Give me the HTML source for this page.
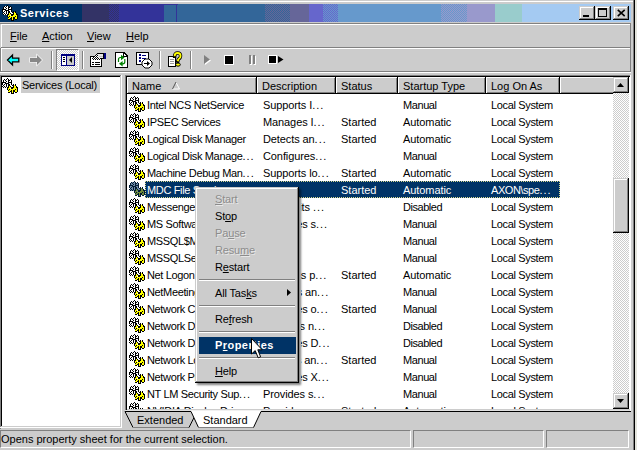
<!DOCTYPE html><html><head><meta charset="utf-8"><style>
*{margin:0;padding:0;box-sizing:border-box}
html,body{width:637px;height:450px;overflow:hidden;background:#cccccc;font-family:"Liberation Sans",sans-serif;font-size:11px;color:#000}
.a{position:absolute}
.t{position:absolute;white-space:nowrap;line-height:13px;height:13px}
.raised{position:absolute;background:#cccccc;box-shadow:inset -1px -1px 0 #000,inset 1px 1px 0 #fff,inset -2px -2px 0 #808080}
.raised2{position:absolute;background:#cccccc;box-shadow:inset -1px -1px 0 #000,inset 1px 1px 0 #cccccc,inset -2px -2px 0 #808080,inset 2px 2px 0 #fff}
.u{text-decoration:underline;text-underline-offset:1px}
.dis{color:#999999;text-shadow:1px 1px 0 #fff}
</style></head><body>
<svg width="0" height="0" style="position:absolute"><defs><symbol id="gear" viewBox="0 0 16 16" shape-rendering="crispEdges"><path d="M5 0h1v1h-1zM2 1h1v1h-1zM4 1h1v1h-1zM6 1h1v1h-1zM8 1h1v1h-1zM1 2h1v1h-1zM3 2h1v1h-1zM6 2h2v1h-2zM9 2h1v1h-1zM1 3h1v1h-1zM4 3h1v1h-1zM6 3h1v1h-1zM9 3h1v1h-1zM0 4h4v1h-4zM6 4h4v1h-4zM0 5h1v1h-1zM3 5h4v1h-4zM9 5h1v1h-1zM0 6h1v1h-1zM2 6h1v1h-1zM4 6h1v1h-1zM6 6h2v1h-2zM9 6h1v1h-1zM11 6h1v1h-1zM13 6h1v1h-1zM1 7h1v1h-1zM4 7h1v1h-1zM6 7h2v1h-2zM10 7h2v1h-2zM13 7h1v1h-1zM0 8h1v1h-1zM2 8h1v1h-1zM4 8h1v1h-1zM6 8h1v1h-1zM8 8h1v1h-1zM11 8h1v1h-1zM14 8h1v1h-1zM1 9h1v1h-1zM3 9h1v1h-1zM5 9h2v1h-2zM9 9h3v1h-3zM14 9h2v1h-2zM5 10h1v1h-1zM9 10h2v1h-2zM15 10h1v1h-1zM5 11h1v1h-1zM7 11h1v1h-1zM13 11h1v1h-1zM15 11h1v1h-1zM6 12h1v1h-1zM9 12h1v1h-1zM11 12h2v1h-2zM15 12h1v1h-1zM8 13h2v1h-2zM11 13h2v1h-2zM15 13h1v1h-1zM6 14h2v1h-2zM9 14h1v1h-1zM11 14h1v1h-1zM13 14h2v1h-2zM9 15h3v1h-3z" fill="#000"/><path d="M3 1h1v1h-1zM5 1h1v1h-1zM2 2h1v1h-1zM4 2h2v1h-2zM8 2h1v1h-1zM2 3h2v1h-2zM5 3h1v1h-1zM7 3h2v1h-2zM4 4h2v1h-2zM1 5h2v1h-2zM7 5h2v1h-2zM1 6h1v1h-1zM3 6h1v1h-1zM5 6h1v1h-1zM8 6h1v1h-1zM2 7h2v1h-2zM5 7h1v1h-1zM8 7h2v1h-2zM1 8h1v1h-1zM3 8h1v1h-1zM5 8h1v1h-1zM9 8h2v1h-2zM2 9h1v1h-1zM4 9h1v1h-1zM8 10h1v1h-1z" fill="#fff"/><path d="M12 7h1v1h-1zM7 8h1v1h-1zM12 8h2v1h-2zM7 9h2v1h-2zM12 9h2v1h-2zM6 10h2v1h-2zM11 10h4v1h-4zM6 11h1v1h-1zM8 11h5v1h-5zM14 11h1v1h-1zM7 12h2v1h-2zM10 12h1v1h-1zM13 12h2v1h-2zM6 13h2v1h-2zM10 13h1v1h-1zM13 13h2v1h-2zM10 14h1v1h-1z" fill="#ff0"/></symbol><symbol id="gearsel" viewBox="0 0 16 16" shape-rendering="crispEdges"><path d="M5 0h1v1h-1zM2 1h1v1h-1zM4 1h1v1h-1zM6 1h1v1h-1zM8 1h1v1h-1zM1 2h1v1h-1zM3 2h1v1h-1zM6 2h2v1h-2zM9 2h1v1h-1zM1 3h1v1h-1zM4 3h1v1h-1zM6 3h1v1h-1zM9 3h1v1h-1zM0 4h4v1h-4zM6 4h4v1h-4zM0 5h1v1h-1zM3 5h4v1h-4zM9 5h1v1h-1zM0 6h1v1h-1zM2 6h1v1h-1zM4 6h1v1h-1zM6 6h2v1h-2zM9 6h1v1h-1zM11 6h1v1h-1zM13 6h1v1h-1zM1 7h1v1h-1zM4 7h1v1h-1zM6 7h2v1h-2zM10 7h2v1h-2zM13 7h1v1h-1zM0 8h1v1h-1zM2 8h1v1h-1zM4 8h1v1h-1zM6 8h1v1h-1zM8 8h1v1h-1zM11 8h1v1h-1zM14 8h1v1h-1zM1 9h1v1h-1zM3 9h1v1h-1zM5 9h2v1h-2zM9 9h3v1h-3zM14 9h2v1h-2zM5 10h1v1h-1zM9 10h2v1h-2zM15 10h1v1h-1zM5 11h1v1h-1zM7 11h1v1h-1zM13 11h1v1h-1zM15 11h1v1h-1zM6 12h1v1h-1zM9 12h1v1h-1zM11 12h2v1h-2zM15 12h1v1h-1zM8 13h2v1h-2zM11 13h2v1h-2zM15 13h1v1h-1zM6 14h2v1h-2zM9 14h1v1h-1zM11 14h1v1h-1zM13 14h2v1h-2zM9 15h3v1h-3z" fill="#001933"/><path d="M3 1h1v1h-1zM5 1h1v1h-1zM2 2h1v1h-1zM4 2h2v1h-2zM8 2h1v1h-1zM2 3h2v1h-2zM5 3h1v1h-1zM7 3h2v1h-2zM4 4h2v1h-2zM1 5h2v1h-2zM7 5h2v1h-2zM1 6h1v1h-1zM3 6h1v1h-1zM5 6h1v1h-1zM8 6h1v1h-1zM2 7h2v1h-2zM5 7h1v1h-1zM8 7h2v1h-2zM1 8h1v1h-1zM3 8h1v1h-1zM5 8h1v1h-1zM9 8h2v1h-2zM2 9h1v1h-1zM4 9h1v1h-1zM8 10h1v1h-1z" fill="#6d8aa8"/><path d="M12 7h1v1h-1zM7 8h1v1h-1zM12 8h2v1h-2zM7 9h2v1h-2zM12 9h2v1h-2zM6 10h2v1h-2zM11 10h4v1h-4zM6 11h1v1h-1zM8 11h5v1h-5zM14 11h1v1h-1zM7 12h2v1h-2zM10 12h1v1h-1zM13 12h2v1h-2zM6 13h2v1h-2zM10 13h1v1h-1zM13 13h2v1h-2zM10 14h1v1h-1z" fill="#6d8a3a"/></symbol></defs></svg>
<div class="a" style="left:0px;top:0px;width:637px;height:450px;background:#cccccc;"></div>
<div class="a" style="left:0px;top:1px;width:634px;height:1px;background:#ffffff;"></div>
<div class="a" style="left:633px;top:0px;width:1px;height:450px;background:#808080;"></div>
<div class="a" style="left:634px;top:0px;width:1px;height:450px;background:#000000;"></div>
<div class="a" style="left:635px;top:0px;width:2px;height:450px;background:#e4e4dc;"></div>
<div class="a" style="left:0px;top:4px;width:82px;height:18px;background:#003366;"></div>
<div class="a" style="left:82px;top:4px;width:27px;height:18px;background:#333366;"></div>
<div class="a" style="left:109px;top:4px;width:10px;height:18px;background:#333380;background:repeating-conic-gradient(#333366 0 25%,#333399 0 50%) 0 0/2px 2px;"></div>
<div class="a" style="left:119px;top:4px;width:45px;height:18px;background:#333399;"></div>
<div class="a" style="left:164px;top:4px;width:101px;height:18px;background:#336699;"></div>
<div class="a" style="left:265px;top:4px;width:25px;height:18px;background:#4d6699;background:repeating-conic-gradient(#336699 0 25%,#666699 0 50%) 0 0/2px 2px;"></div>
<div class="a" style="left:290px;top:4px;width:19px;height:18px;background:#666699;"></div>
<div class="a" style="left:309px;top:4px;width:14px;height:18px;background:#6666cc;"></div>
<div class="a" style="left:323px;top:4px;width:15px;height:18px;background:#6680cc;background:repeating-conic-gradient(#6666cc 0 25%,#6699cc 0 50%) 0 0/2px 2px;"></div>
<div class="a" style="left:338px;top:4px;width:103px;height:18px;background:#6699cc;"></div>
<div class="a" style="left:441px;top:4px;width:26px;height:18px;background:#8099cc;background:repeating-conic-gradient(#6699cc 0 25%,#9999cc 0 50%) 0 0/2px 2px;"></div>
<div class="a" style="left:467px;top:4px;width:28px;height:18px;background:#9999cc;"></div>
<div class="a" style="left:495px;top:4px;width:27px;height:18px;background:#99cccc;"></div>
<div class="a" style="left:522px;top:4px;width:109px;height:18px;background:#a4caf2;"></div>
<div class="a" style="left:164px;top:4px;width:14px;height:1px;background:#333399;"></div>
<div class="a" style="left:176px;top:4px;width:1px;height:18px;background:#333399;"></div>
<svg class="a" style="left:2px;top:5px" width="16" height="16"><use href="#gear"/></svg>
<div class="t" style="left:20px;top:7px;color:#fff;font-weight:bold;letter-spacing:0.5px;">Services</div>
<div class="raised2" style="left:579px;top:6px;width:16px;height:14px"></div>
<div class="raised2" style="left:595px;top:6px;width:16px;height:14px"></div>
<div class="raised2" style="left:613px;top:6px;width:16px;height:14px"></div>
<div class="a" style="left:583px;top:15px;width:6px;height:2px;background:#000;"></div>
<div class="a" style="left:598px;top:8px;width:9px;height:9px;border:1px solid #000;border-top-width:2px"></div>
<svg class="a" style="left:617px;top:9px" width="9" height="8"><path d="M0.8 0.8L7.7 7.2M7.7 0.8L0.8 7.2" stroke="#000" stroke-width="1.6" fill="none"/></svg>
<div class="a" style="left:0px;top:23px;width:631px;height:1px;background:#808080;"></div>
<div class="a" style="left:1px;top:24px;width:630px;height:1px;background:#ffffff;"></div>
<div class="a" style="left:1px;top:24px;width:1px;height:23px;background:#ffffff;"></div>
<div class="a" style="left:1px;top:47px;width:630px;height:1px;background:#808080;"></div>
<div class="a" style="left:630px;top:24px;width:1px;height:23px;background:#808080;"></div>
<div class="t" style="left:10px;top:30px;"><span class="u">F</span>ile</div>
<div class="t" style="left:42px;top:30px;"><span class="u">A</span>ction</div>
<div class="t" style="left:87px;top:30px;"><span class="u">V</span>iew</div>
<div class="t" style="left:126px;top:30px;"><span class="u">H</span>elp</div>
<div class="a" style="left:0px;top:48px;width:1px;height:24px;background:#808080;"></div>
<div class="a" style="left:1px;top:48px;width:630px;height:1px;background:#ffffff;"></div>
<div class="a" style="left:1px;top:48px;width:1px;height:24px;background:#ffffff;"></div>
<div class="a" style="left:1px;top:71px;width:630px;height:1px;background:#808080;"></div>
<div class="a" style="left:630px;top:48px;width:1px;height:24px;background:#808080;"></div>
<div class="a" style="left:0px;top:72px;width:631px;height:1px;background:#ffffff;"></div>
<svg class="a" style="left:0;top:48px" width="300" height="24" shape-rendering="crispEdges"><path d="M7.5 12L12.5 7V10.2H18.8V13.8H12.5V17Z" fill="#00ffff" stroke="#000" stroke-width="1.3" shape-rendering="geometricPrecision"/><path d="M42 12L37 7V10H30V14H37V17Z" fill="#999999" stroke="#fff" stroke-width="1.2" shape-rendering="geometricPrecision"/><path d="M42 12L37 7V10H30V14H37V17Z" fill="#888888" stroke="none" shape-rendering="geometricPrecision"/><rect x="51" y="3" width="1" height="18" fill="#808080"/><rect x="52" y="3" width="1" height="18" fill="#fff"/><rect x="82" y="3" width="1" height="18" fill="#808080"/><rect x="83" y="3" width="1" height="18" fill="#fff"/><rect x="159" y="3" width="1" height="18" fill="#808080"/><rect x="160" y="3" width="1" height="18" fill="#fff"/><rect x="190" y="3" width="1" height="18" fill="#808080"/><rect x="191" y="3" width="1" height="18" fill="#fff"/></svg>
<div class="a" style="left:56px;top:49px;width:23px;height:22px;border-top:1px solid #808080;border-left:1px solid #808080;border-right:1px solid #fff;border-bottom:1px solid #fff;background:repeating-conic-gradient(#ffffff 0 25%,#cccccc 0 50%) 0 0/2px 2px"></div>
<svg class="a" style="left:0;top:48px" width="300" height="24" shape-rendering="crispEdges"><rect x="61" y="6" width="14" height="12" fill="#000080"/><rect x="62" y="8" width="4" height="9" fill="#fff"/><rect x="67" y="8" width="7" height="9" fill="#cccccc"/><rect x="63" y="9" width="2" height="1" fill="#000"/><rect x="63" y="11" width="2" height="1" fill="#000"/><rect x="63" y="13" width="2" height="1" fill="#000"/><path d="M69 12L72 9V15Z" fill="#000" shape-rendering="geometricPrecision"/><defs><pattern id="chk" width="2" height="2" patternUnits="userSpaceOnUse"><rect width="2" height="2" fill="#fff"/><rect width="1" height="1" fill="#000"/><rect x="1" y="1" width="1" height="1" fill="#000"/></pattern></defs><rect x="90" y="8" width="12" height="11" fill="#000"/><rect x="91" y="9" width="10" height="9" fill="#fff"/><rect x="92" y="14" width="2" height="1" fill="#000"/><rect x="95" y="14" width="5" height="1" fill="#000"/><rect x="92" y="16" width="2" height="1" fill="#000"/><rect x="95" y="16" width="5" height="1" fill="#000"/><path d="M96 6H97V7H98V8H99V9H100V12H92V11H93V9H94V8H95V7H96Z" fill="url(#chk)"/><rect x="92" y="10" width="1" height="1" fill="#000"/><rect x="93" y="11" width="1" height="1" fill="#000"/><rect x="97" y="5" width="6" height="1" fill="#000"/><rect x="100" y="10" width="3" height="1" fill="#000"/><rect x="98" y="6" width="5" height="4" fill="#e4e4e4"/><rect x="99" y="8" width="4" height="1" fill="#c0c0c0"/><rect x="103" y="5" width="1" height="6" fill="#000"/><rect x="104" y="5" width="2" height="6" fill="#000080"/><path d="M115 4H124L128 8V20H115Z" fill="#000"/><path d="M116 5H123L127 9V19H116Z" fill="#fff"/><path d="M123 5V8H127" fill="none" stroke="#000" stroke-width="1"/><path d="M118.5 14V11.5Q118.5 9.5 120.5 9.5H121.5" stroke="#008000" stroke-width="1.2" fill="none" shape-rendering="geometricPrecision"/><path d="M121 6.8L124.6 9.5L121 12.2Z" fill="#008000" shape-rendering="geometricPrecision"/><path d="M124.8 11V13.8Q124.8 15.8 122.8 15.8H122" stroke="#008000" stroke-width="1.2" fill="none" shape-rendering="geometricPrecision"/><path d="M122.6 13.1L119 15.8L122.6 18.5Z" fill="#008000" shape-rendering="geometricPrecision"/><rect x="136" y="4" width="13" height="13" fill="#000"/><rect x="137" y="5" width="11" height="11" fill="#fff"/><rect x="139" y="6" width="2" height="2" fill="#000080"/><rect x="142" y="7" width="4" height="1" fill="#000080"/><rect x="139" y="9" width="2" height="2" fill="#000080"/><rect x="142" y="10" width="4" height="1" fill="#000080"/><rect x="139" y="12" width="2" height="2" fill="#000080"/><path d="M145 11H149L152 14V17L149 20H145L142 17V14Z" fill="#fff" stroke="#000" stroke-width="1" shape-rendering="geometricPrecision"/><path d="M144 15H147V13L150 15.5L147 18V16H144Z" fill="#000" shape-rendering="geometricPrecision"/><rect x="168" y="8" width="8" height="11" fill="#000"/><rect x="169" y="9" width="6" height="9" fill="#fff"/><rect x="170" y="11" width="4" height="1" fill="#999"/><rect x="170" y="13" width="4" height="1" fill="#999"/><rect x="170" y="15" width="4" height="1" fill="#999"/><path d="M174.6 8.2Q174.6 5 177.6 5Q180.6 5 180.6 8Q180.6 10 178.2 11.5L177.8 13.2" stroke="#000" stroke-width="3.4" fill="none" stroke-linecap="square" shape-rendering="geometricPrecision"/><path d="M174.6 8.2Q174.6 5 177.6 5Q180.6 5 180.6 8Q180.6 10 178.2 11.5L177.8 13.2" stroke="#ffff00" stroke-width="1.8" fill="none" shape-rendering="geometricPrecision"/><ellipse cx="178" cy="16.6" rx="2.3" ry="1.6" fill="#ffff00" stroke="#000" stroke-width="1" shape-rendering="geometricPrecision"/><path d="M205 8L211 12.5L205 17Z" fill="#fff" shape-rendering="geometricPrecision"/><path d="M204 7L210 11.5L204 16Z" fill="#808080" shape-rendering="geometricPrecision"/><rect x="224" y="7" width="10" height="10" fill="#fff"/><rect x="225" y="8" width="8" height="8" fill="#000"/><rect x="250" y="8" width="2" height="9" fill="#fff"/><rect x="254" y="8" width="2" height="9" fill="#fff"/><rect x="249" y="7" width="2" height="9" fill="#808080"/><rect x="253" y="7" width="2" height="9" fill="#808080"/><rect x="268" y="7" width="9" height="9" fill="#fff"/><rect x="269" y="8" width="7" height="7" fill="#000"/><path d="M278 8L283.5 11.5L278 15Z" fill="#000" shape-rendering="geometricPrecision"/></svg>
<div class="a" style="left:0px;top:75px;width:122px;height:1px;background:#808080;"></div>
<div class="a" style="left:0px;top:75px;width:1px;height:354px;background:#808080;"></div>
<div class="a" style="left:1px;top:76px;width:120px;height:1px;background:#000000;"></div>
<div class="a" style="left:1px;top:76px;width:1px;height:351px;background:#000000;"></div>
<div class="a" style="left:2px;top:77px;width:118px;height:349px;background:#ffffff;"></div>
<div class="a" style="left:120px;top:76px;width:1px;height:351px;background:#cccccc;"></div>
<div class="a" style="left:1px;top:426px;width:120px;height:1px;background:#cccccc;"></div>
<div class="a" style="left:121px;top:75px;width:1px;height:353px;background:#ffffff;"></div>
<div class="a" style="left:0px;top:427px;width:122px;height:1px;background:#ffffff;"></div>
<svg class="a" style="left:2px;top:78px" width="16" height="16"><use href="#gear"/></svg>
<div class="a" style="left:21px;top:77px;width:79px;height:16px;background:#cccccc;"></div>
<div class="t" style="left:22px;top:79px;letter-spacing:-0.25px;">Services (Local)</div>
<div class="a" style="left:125px;top:75px;width:506px;height:1px;background:#808080;"></div>
<div class="a" style="left:125px;top:75px;width:1px;height:336px;background:#808080;"></div>
<div class="a" style="left:126px;top:76px;width:504px;height:1px;background:#000000;"></div>
<div class="a" style="left:126px;top:76px;width:1px;height:335px;background:#000000;"></div>
<div class="a" style="left:630px;top:75px;width:1px;height:336px;background:#ffffff;"></div>
<div class="a" style="left:127px;top:77px;width:503px;height:332px;background:#ffffff;"></div>
<div class="a" style="left:127px;top:94px;width:486px;height:315px;overflow:hidden">
<svg class="a" style="left:2px;top:2px" width="16" height="16"><use href="#gear"/></svg>
<div class="t" style="left:20px;top:5px;letter-spacing:-0.35px;">Intel NCS NetService</div>
<div class="t" style="left:136px;top:5px;letter-spacing:-0.1px;">Supports I<span style="letter-spacing:1px">...</span></div>
<div class="t" style="left:214px;top:5px;"></div>
<div class="t" style="left:276px;top:5px;letter-spacing:-0.42px;">Manual</div>
<div class="t" style="left:364px;top:5px;letter-spacing:-0.35px;">Local System</div>
<svg class="a" style="left:2px;top:19px" width="16" height="16"><use href="#gear"/></svg>
<div class="t" style="left:20px;top:22px;letter-spacing:-0.35px;">IPSEC Services</div>
<div class="t" style="left:136px;top:22px;letter-spacing:-0.1px;">Manages I<span style="letter-spacing:1px">...</span></div>
<div class="t" style="left:214px;top:22px;">Started</div>
<div class="t" style="left:276px;top:22px;letter-spacing:-0.08px;">Automatic</div>
<div class="t" style="left:364px;top:22px;letter-spacing:-0.35px;">Local System</div>
<svg class="a" style="left:2px;top:36px" width="16" height="16"><use href="#gear"/></svg>
<div class="t" style="left:20px;top:39px;letter-spacing:-0.35px;">Logical Disk Manager</div>
<div class="t" style="left:136px;top:39px;letter-spacing:-0.1px;">Detects an<span style="letter-spacing:1px">...</span></div>
<div class="t" style="left:214px;top:39px;">Started</div>
<div class="t" style="left:276px;top:39px;letter-spacing:-0.08px;">Automatic</div>
<div class="t" style="left:364px;top:39px;letter-spacing:-0.35px;">Local System</div>
<svg class="a" style="left:2px;top:53px" width="16" height="16"><use href="#gear"/></svg>
<div class="t" style="left:20px;top:56px;letter-spacing:-0.35px;">Logical Disk Manage<span style="letter-spacing:1px">...</span></div>
<div class="t" style="left:136px;top:56px;letter-spacing:-0.1px;">Configures<span style="letter-spacing:1px">...</span></div>
<div class="t" style="left:214px;top:56px;"></div>
<div class="t" style="left:276px;top:56px;letter-spacing:-0.42px;">Manual</div>
<div class="t" style="left:364px;top:56px;letter-spacing:-0.35px;">Local System</div>
<svg class="a" style="left:2px;top:70px" width="16" height="16"><use href="#gear"/></svg>
<div class="t" style="left:20px;top:73px;letter-spacing:-0.35px;">Machine Debug Man<span style="letter-spacing:1px">...</span></div>
<div class="t" style="left:136px;top:73px;letter-spacing:-0.1px;">Supports lo<span style="letter-spacing:1px">...</span></div>
<div class="t" style="left:214px;top:73px;">Started</div>
<div class="t" style="left:276px;top:73px;letter-spacing:-0.08px;">Automatic</div>
<div class="t" style="left:364px;top:73px;letter-spacing:-0.35px;">Local System</div>
<div class="a" style="left:18px;top:87px;width:415px;height:17px;background:#003366;"></div>
<div class="a" style="left:18px;top:87px;width:415px;height:17px;border:1px dotted #d8d890"></div>
<svg class="a" style="left:2px;top:87px" width="16" height="16"><use href="#gearsel"/></svg>
<div class="t" style="left:20px;top:90px;color:#fff;letter-spacing:-0.35px;">MDC File Service</div>
<div class="t" style="left:136px;top:90px;color:#fff;letter-spacing:-0.1px;"></div>
<div class="t" style="left:214px;top:90px;color:#fff;">Started</div>
<div class="t" style="left:276px;top:90px;color:#fff;letter-spacing:-0.08px;">Automatic</div>
<div class="t" style="left:364px;top:90px;color:#fff;letter-spacing:-0.45px;">AXON\spe<span style="letter-spacing:1px">...</span></div>
<svg class="a" style="left:2px;top:104px" width="16" height="16"><use href="#gear"/></svg>
<div class="t" style="left:20px;top:107px;letter-spacing:-0.35px;">Messenger</div>
<div class="a" style="left:174px;top:104px;width:40px;height:17px;overflow:hidden">
<div class="t" style="left:-38px;top:3px;letter-spacing:-0.1px;">Transmits <span style="letter-spacing:1px">...</span></div>
</div>
<div class="t" style="left:214px;top:107px;"></div>
<div class="t" style="left:276px;top:107px;letter-spacing:-0.46px;">Disabled</div>
<div class="t" style="left:364px;top:107px;letter-spacing:-0.35px;">Local System</div>
<svg class="a" style="left:2px;top:121px" width="16" height="16"><use href="#gear"/></svg>
<div class="t" style="left:20px;top:124px;letter-spacing:-0.35px;">MS Software Shado<span style="letter-spacing:1px">...</span></div>
<div class="a" style="left:174px;top:121px;width:40px;height:17px;overflow:hidden">
<div class="t" style="left:-38px;top:3px;letter-spacing:-0.1px;">Manages s<span style="letter-spacing:1px">...</span></div>
</div>
<div class="t" style="left:214px;top:124px;"></div>
<div class="t" style="left:276px;top:124px;letter-spacing:-0.42px;">Manual</div>
<div class="t" style="left:364px;top:124px;letter-spacing:-0.35px;">Local System</div>
<svg class="a" style="left:2px;top:138px" width="16" height="16"><use href="#gear"/></svg>
<div class="t" style="left:20px;top:141px;letter-spacing:-0.35px;">MSSQL$MICROSOFT<span style="letter-spacing:1px">...</span></div>
<div class="a" style="left:174px;top:138px;width:40px;height:17px;overflow:hidden">
<div class="t" style="left:-38px;top:3px;letter-spacing:-0.1px;"></div>
</div>
<div class="t" style="left:214px;top:141px;"></div>
<div class="t" style="left:276px;top:141px;letter-spacing:-0.42px;">Manual</div>
<div class="t" style="left:364px;top:141px;letter-spacing:-0.35px;">Local System</div>
<svg class="a" style="left:2px;top:155px" width="16" height="16"><use href="#gear"/></svg>
<div class="t" style="left:20px;top:158px;letter-spacing:-0.35px;">MSSQLServerADHelper</div>
<div class="a" style="left:174px;top:155px;width:40px;height:17px;overflow:hidden">
<div class="t" style="left:-38px;top:3px;letter-spacing:-0.1px;"></div>
</div>
<div class="t" style="left:214px;top:158px;"></div>
<div class="t" style="left:276px;top:158px;letter-spacing:-0.42px;">Manual</div>
<div class="t" style="left:364px;top:158px;letter-spacing:-0.35px;">Local System</div>
<svg class="a" style="left:2px;top:172px" width="16" height="16"><use href="#gear"/></svg>
<div class="t" style="left:20px;top:175px;letter-spacing:-0.35px;">Net Logon</div>
<div class="a" style="left:174px;top:172px;width:40px;height:17px;overflow:hidden">
<div class="t" style="left:-38px;top:3px;letter-spacing:-0.1px;">Supports p<span style="letter-spacing:1px">...</span></div>
</div>
<div class="t" style="left:214px;top:175px;">Started</div>
<div class="t" style="left:276px;top:175px;letter-spacing:-0.08px;">Automatic</div>
<div class="t" style="left:364px;top:175px;letter-spacing:-0.35px;">Local System</div>
<svg class="a" style="left:2px;top:189px" width="16" height="16"><use href="#gear"/></svg>
<div class="t" style="left:20px;top:192px;letter-spacing:-0.35px;">NetMeeting Remote <span style="letter-spacing:1px">...</span></div>
<div class="a" style="left:174px;top:189px;width:40px;height:17px;overflow:hidden">
<div class="t" style="left:-38px;top:3px;letter-spacing:-0.1px;">Enables an<span style="letter-spacing:1px">...</span></div>
</div>
<div class="t" style="left:214px;top:192px;"></div>
<div class="t" style="left:276px;top:192px;letter-spacing:-0.42px;">Manual</div>
<div class="t" style="left:364px;top:192px;letter-spacing:-0.35px;">Local System</div>
<svg class="a" style="left:2px;top:206px" width="16" height="16"><use href="#gear"/></svg>
<div class="t" style="left:20px;top:209px;letter-spacing:-0.35px;">Network Connections</div>
<div class="a" style="left:174px;top:206px;width:40px;height:17px;overflow:hidden">
<div class="t" style="left:-38px;top:3px;letter-spacing:-0.1px;">Manages o<span style="letter-spacing:1px">...</span></div>
</div>
<div class="t" style="left:214px;top:209px;">Started</div>
<div class="t" style="left:276px;top:209px;letter-spacing:-0.42px;">Manual</div>
<div class="t" style="left:364px;top:209px;letter-spacing:-0.35px;">Local System</div>
<svg class="a" style="left:2px;top:223px" width="16" height="16"><use href="#gear"/></svg>
<div class="t" style="left:20px;top:226px;letter-spacing:-0.35px;">Network DDE</div>
<div class="a" style="left:174px;top:223px;width:40px;height:17px;overflow:hidden">
<div class="t" style="left:-38px;top:3px;letter-spacing:-0.1px;">Provides n<span style="letter-spacing:1px">...</span></div>
</div>
<div class="t" style="left:214px;top:226px;"></div>
<div class="t" style="left:276px;top:226px;letter-spacing:-0.46px;">Disabled</div>
<div class="t" style="left:364px;top:226px;letter-spacing:-0.35px;">Local System</div>
<svg class="a" style="left:2px;top:240px" width="16" height="16"><use href="#gear"/></svg>
<div class="t" style="left:20px;top:243px;letter-spacing:-0.35px;">Network DDE DSDM</div>
<div class="a" style="left:174px;top:240px;width:40px;height:17px;overflow:hidden">
<div class="t" style="left:-38px;top:3px;letter-spacing:-0.1px;">Manages D<span style="letter-spacing:1px">...</span></div>
</div>
<div class="t" style="left:214px;top:243px;"></div>
<div class="t" style="left:276px;top:243px;letter-spacing:-0.46px;">Disabled</div>
<div class="t" style="left:364px;top:243px;letter-spacing:-0.35px;">Local System</div>
<svg class="a" style="left:2px;top:257px" width="16" height="16"><use href="#gear"/></svg>
<div class="t" style="left:20px;top:260px;letter-spacing:-0.35px;">Network Location A<span style="letter-spacing:1px">...</span></div>
<div class="a" style="left:174px;top:257px;width:40px;height:17px;overflow:hidden">
<div class="t" style="left:-38px;top:3px;letter-spacing:-0.1px;">Collects an<span style="letter-spacing:1px">...</span></div>
</div>
<div class="t" style="left:214px;top:260px;">Started</div>
<div class="t" style="left:276px;top:260px;letter-spacing:-0.42px;">Manual</div>
<div class="t" style="left:364px;top:260px;letter-spacing:-0.35px;">Local System</div>
<svg class="a" style="left:2px;top:274px" width="16" height="16"><use href="#gear"/></svg>
<div class="t" style="left:20px;top:277px;letter-spacing:-0.35px;">Network Provisioni<span style="letter-spacing:1px">...</span></div>
<div class="a" style="left:174px;top:274px;width:40px;height:17px;overflow:hidden">
<div class="t" style="left:-38px;top:3px;letter-spacing:-0.1px;">Manages X<span style="letter-spacing:1px">...</span></div>
</div>
<div class="t" style="left:214px;top:277px;"></div>
<div class="t" style="left:276px;top:277px;letter-spacing:-0.42px;">Manual</div>
<div class="t" style="left:364px;top:277px;letter-spacing:-0.35px;">Local System</div>
<svg class="a" style="left:2px;top:291px" width="16" height="16"><use href="#gear"/></svg>
<div class="t" style="left:20px;top:294px;letter-spacing:-0.35px;">NT LM Security Sup<span style="letter-spacing:1px">...</span></div>
<div class="t" style="left:136px;top:294px;letter-spacing:-0.1px;">Provides s<span style="letter-spacing:1px">...</span></div>
<div class="t" style="left:214px;top:294px;"></div>
<div class="t" style="left:276px;top:294px;letter-spacing:-0.42px;">Manual</div>
<div class="t" style="left:364px;top:294px;letter-spacing:-0.35px;">Local System</div>
<svg class="a" style="left:2px;top:308px" width="16" height="16"><use href="#gear"/></svg>
<div class="t" style="left:20px;top:311px;letter-spacing:-0.35px;">NVIDIA Display Driv<span style="letter-spacing:1px">...</span></div>
<div class="t" style="left:136px;top:311px;letter-spacing:-0.1px;">Provides s<span style="letter-spacing:1px">...</span></div>
<div class="t" style="left:214px;top:311px;">Started</div>
<div class="t" style="left:276px;top:311px;letter-spacing:-0.08px;">Automatic</div>
<div class="t" style="left:364px;top:311px;letter-spacing:-0.35px;">Local System</div>
</div>
<div class="a" style="left:560px;top:77px;width:53px;height:17px;background:#cccccc;box-shadow:inset 0 -1px 0 #000,inset 1px 1px 0 #fff,inset 0 -2px 0 #808080"></div>
<div class="raised" style="left:127px;top:77px;width:130px;height:17px"></div>
<div class="t" style="left:132px;top:80px;">Name</div>
<div class="raised" style="left:257px;top:77px;width:79px;height:17px"></div>
<div class="t" style="left:262px;top:80px;">Description</div>
<div class="raised" style="left:336px;top:77px;width:62px;height:17px"></div>
<div class="t" style="left:341px;top:80px;">Status</div>
<div class="raised" style="left:398px;top:77px;width:88px;height:17px"></div>
<div class="t" style="left:403px;top:80px;">Startup Type</div>
<div class="raised" style="left:486px;top:77px;width:74px;height:17px"></div>
<div class="t" style="left:491px;top:80px;">Log On As</div>
<svg class="a" style="left:171px;top:81px" width="10" height="9"><path d="M5 1.5L8.5 8H1.5" stroke="#fff" stroke-width="1" fill="none"/><path d="M5 1L1.5 8" stroke="#555" stroke-width="1" fill="none"/></svg>
<div class="a" style="left:613px;top:93px;width:16px;height:300px;background:repeating-conic-gradient(#ffffff 0 25%,#cccccc 0 50%) 0 0/2px 2px"></div>
<div class="raised2" style="left:613px;top:77px;width:16px;height:16px"></div>
<svg class="a" style="left:613px;top:77px" width="16" height="16"><path d="M4 10h7l-3.5-4z" fill="#000"/></svg>
<div class="raised2" style="left:613px;top:178px;width:16px;height:55px"></div>
<div class="raised2" style="left:613px;top:393px;width:16px;height:16px"></div>
<svg class="a" style="left:613px;top:393px" width="16" height="16"><path d="M4 6h7l-3.5 4z" fill="#000"/></svg>
<div class="a" style="left:127px;top:409px;width:503px;height:1px;background:#cccccc;"></div>
<div class="a" style="left:125px;top:410px;width:505px;height:1px;background:#e0e0e0;"></div>
<div class="a" style="left:125px;top:411px;width:506px;height:1px;background:#000000;"></div>
<svg class="a" style="left:120px;top:409px" width="200" height="20"><path d="M5.5 3L13 18.5H69L76.8 3Z" fill="#cccccc"/><path d="M5 2.5L13 18.5" stroke="#000" stroke-width="1" fill="none"/><path d="M13 18.5H69" stroke="#808080" stroke-width="1" fill="none"/><path d="M69 18.5L77 2.5" stroke="#000" stroke-width="1" fill="none"/><path d="M71 1.5V2.5L78.5 18.5H133.5L141 2.5V1.5Z" fill="#ffffff"/><path d="M71 2.5L78.5 18.5" stroke="#000" stroke-width="1" fill="none"/><path d="M78.5 18.5H133.5" stroke="#808080" stroke-width="1" fill="none"/><path d="M133.5 18.5L141 2.5" stroke="#000" stroke-width="1" fill="none"/></svg>
<div class="t" style="left:137px;top:414px;">Extended</div>
<div class="t" style="left:203px;top:414px;">Standard</div>
<div class="a" style="left:0;top:430px;width:411px;height:18px;border-top:1px solid #808080;border-left:1px solid #808080;border-bottom:1px solid #fff;border-right:1px solid #fff"></div>
<div class="a" style="left:413px;top:430px;width:131px;height:18px;border-top:1px solid #808080;border-left:1px solid #808080;border-bottom:1px solid #fff;border-right:1px solid #fff"></div>
<div class="a" style="left:546px;top:430px;width:83px;height:18px;border-top:1px solid #808080;border-left:1px solid #808080;border-bottom:1px solid #fff;border-right:1px solid #fff"></div>
<div class="t" style="left:1px;top:433px;">Opens property sheet for the current selection.</div>
<div class="a" style="left:195px;top:187px;width:104px;height:196px;background:#cccccc;box-shadow:inset -1px -1px 0 #000,inset 1px 1px 0 #cccccc,inset -2px -2px 0 #808080,inset 2px 2px 0 #fff,2px 2px 2px rgba(0,0,0,0.5)"></div>
<div class="t" style="left:215px;top:193px;letter-spacing:-0.15px;color:#8c8c8c;text-shadow:1px 1px 0 rgba(255,255,255,0.55);"><span class="u">S</span>tart</div>
<div class="t" style="left:215px;top:210px;letter-spacing:-0.15px;">St<span class="u">o</span>p</div>
<div class="t" style="left:215px;top:227px;letter-spacing:-0.15px;color:#8c8c8c;text-shadow:1px 1px 0 rgba(255,255,255,0.55);">Pa<span class="u">u</span>se</div>
<div class="t" style="left:215px;top:244px;letter-spacing:-0.15px;color:#8c8c8c;text-shadow:1px 1px 0 rgba(255,255,255,0.55);">Resu<span class="u">m</span>e</div>
<div class="t" style="left:215px;top:261px;letter-spacing:-0.15px;">R<span class="u">e</span>start</div>
<div class="a" style="left:199px;top:279px;width:96px;height:1px;background:#808080;"></div>
<div class="a" style="left:199px;top:280px;width:96px;height:1px;background:#ffffff;"></div>
<div class="t" style="left:215px;top:287px;letter-spacing:-0.15px;">All Tas<span class="u">k</span>s</div>
<svg class="a" style="left:286px;top:288px" width="6" height="9"><path d="M1 1v7l4-3.5z" fill="#000"/></svg>
<div class="a" style="left:199px;top:305px;width:96px;height:1px;background:#808080;"></div>
<div class="a" style="left:199px;top:306px;width:96px;height:1px;background:#ffffff;"></div>
<div class="t" style="left:215px;top:313px;letter-spacing:-0.15px;">Re<span class="u">f</span>resh</div>
<div class="a" style="left:199px;top:331px;width:96px;height:1px;background:#808080;"></div>
<div class="a" style="left:199px;top:332px;width:96px;height:1px;background:#ffffff;"></div>
<div class="a" style="left:199px;top:337px;width:97px;height:17px;background:#003366;"></div>
<div class="t" style="left:215px;top:339px;color:#fff;font-weight:bold;letter-spacing:0.45px;">P<span class="u">r</span>operties</div>
<div class="a" style="left:199px;top:357px;width:96px;height:1px;background:#808080;"></div>
<div class="a" style="left:199px;top:358px;width:96px;height:1px;background:#ffffff;"></div>
<div class="t" style="left:215px;top:365px;letter-spacing:-0.15px;"><span class="u">H</span>elp</div>
<svg class="a" style="left:251px;top:338px" width="13" height="22"><path d="M0.5 0.5V16L4.2 12.6L7.2 19.8L9.6 18.8L6.8 11.8H11.2Z" fill="#fff" stroke="#000" stroke-width="1"/></svg>
</body></html>
